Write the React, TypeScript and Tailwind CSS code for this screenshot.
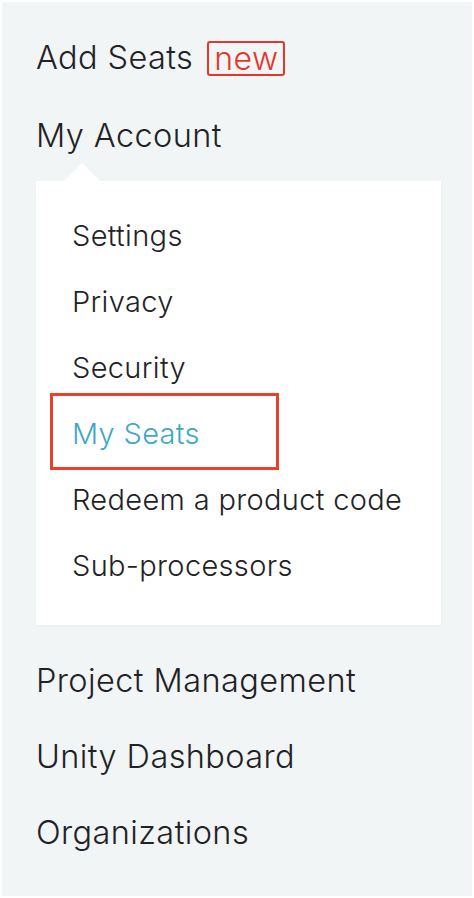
export default function App() {
  return (
    <div className="w-[474px] h-[898px] bg-white p-[2px] font-['Inter',sans-serif] font-light text-[#1f2326]">
      <div className="h-full bg-[#f2f5f6] pt-[18px] pl-[34px] pr-[31px]">
        <div className="flex items-center h-[77px] text-[32.5px] tracking-[0.4px]">
          <span>Add Seats</span>
          <span className="ml-[14px] h-[35px] px-[5px] flex items-center border-2 border-[#e2382c] rounded-[3px] text-[#e2382c] text-[32px] leading-none">
            new
          </span>
        </div>
        <div className="h-[77px] leading-[77px] text-[32.5px] tracking-[0.4px]">My Account</div>
        <div className="relative mt-[7px] bg-white shadow-[0_1px_2px_rgba(0,0,0,0.04)] pt-[22px] pb-[26px] pl-[36px]">
          <div className="absolute -top-[18px] left-[28px] w-0 h-0 border-l-[18px] border-r-[18px] border-b-[18px] border-l-transparent border-r-transparent border-b-white" />
          <SubItem>Settings</SubItem>
          <SubItem>Privacy</SubItem>
          <SubItem>Security</SubItem>
          <SubItem active>My Seats</SubItem>
          <SubItem>Redeem a product code</SubItem>
          <SubItem>Sub-processors</SubItem>
          <div className="absolute left-[14px] top-[212px] w-[229px] h-[77px] border-[3.5px] border-[#e8402b]" />
        </div>
        <div className="mt-[18px]">
          <MainItem>Project Management</MainItem>
          <MainItem>Unity Dashboard</MainItem>
          <MainItem>Organizations</MainItem>
        </div>
      </div>
    </div>
  );
}

function MainItem({ children }: { children: React.ReactNode }) {
  return <div className="h-[76px] leading-[76px] text-[32.5px] tracking-[0.4px]">{children}</div>;
}

function SubItem({ children, active }: { children: React.ReactNode; active?: boolean }) {
  return (
    <div
      className={
        active
          ? "h-[66px] leading-[66px] text-[29px] tracking-[0.33px] text-[#3fa8c6]"
          : "h-[66px] leading-[66px] text-[29px] tracking-[0.33px]"
      }
    >
      {children}
    </div>
  );
}
